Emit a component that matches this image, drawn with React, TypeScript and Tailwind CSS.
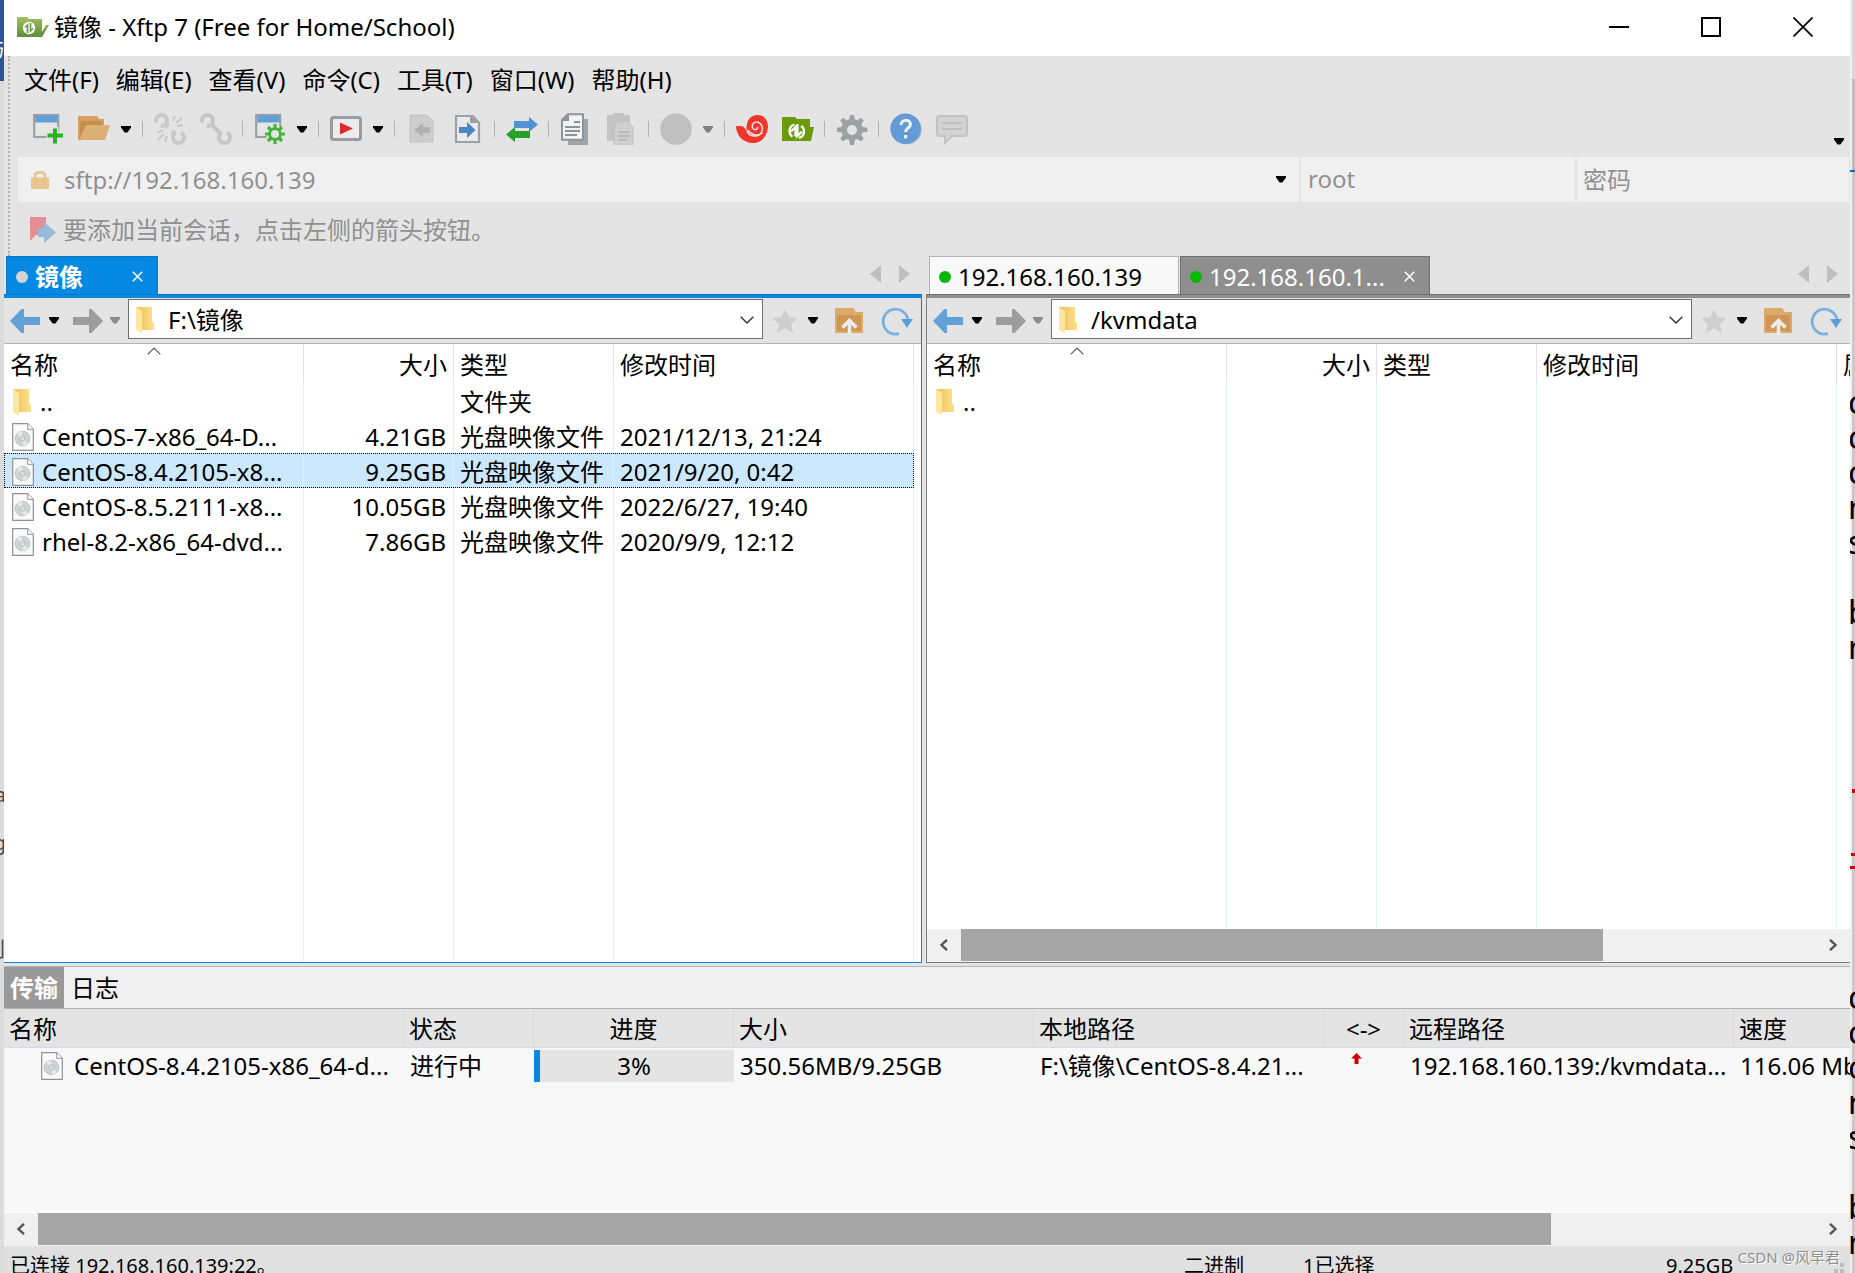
import type { ReactNode } from "react";

type Kid = { children: ReactNode };

function Icon({ children }: Kid) {
  return (
    <svg viewBox="0 0 32 32" className="block h-8 w-8 shrink-0" aria-hidden="true">
      {children}
    </svg>
  );
}

function Tool({ label, children, caret, muted }: { label: string; children: ReactNode; caret?: boolean; muted?: boolean }) {
  return (
    <div className="flex items-center">
      <button type="button" aria-label={label} className="block">
        <Icon>{children}</Icon>
      </button>
      {caret && (
        <button type="button" aria-label={`${label} 菜单`} className={muted ? "mr-px ml-[11px] text-[#808080]" : "mr-px ml-[11px] text-black"}>
          <Caret />
        </button>
      )}
    </div>
  );
}

function Caret() {
  return (
    <svg viewBox="0 0 10 7" className="block h-[7px] w-[10px]" aria-hidden="true">
      <path d="M0 0h10v1.6L6.4 6.4H3.6L0 1.6z" fill="currentColor" />
    </svg>
  );
}

function Group({ children }: Kid) {
  return <div className="flex items-center gap-[14px]">{children}</div>;
}

function Separator() {
  return <div className="mr-[11px] ml-[10px] h-4 w-px bg-[#b4b4b4]" />;
}

function Folder() {
  return (
    <svg viewBox="0 0 20 28" className="block h-7 w-5 shrink-0" aria-hidden="true">
      <defs>
        <linearGradient id="fold" x1="0" x2="1">
          <stop offset="0" stopColor="#e9c05c" />
          <stop offset="1" stopColor="#ffe08a" />
        </linearGradient>
      </defs>
      <path d="M1 1h16v14l2 2v7H6z" fill="url(#fold)" />
      <path d="M1 1l6 4v22.500L1 24z" fill="#ffe7a0" />
    </svg>
  );
}

function DiscFile() {
  return (
    <svg viewBox="0 0 22 28" className="block h-7 w-[22px] shrink-0" aria-hidden="true">
      <path d="M.7.7h15l5.600 5.600v21H.7z" fill="#fafafa" stroke="#8e9296" strokeWidth="1.200" />
      <path d="M15.700.7v5.600h5.600" fill="#fff" stroke="#8e9296" />
      <circle cx="10.500" cy="15.500" r="7.300" fill="#cfd4d4" stroke="#b2b6b8" strokeWidth=".8" />
      <path d="M10.500 15.500L5 11a7 7 0 0 1 5-2.700zM10.500 15.500l5.500 4.500a7 7 0 0 1-5 2.700z" fill="#e4ece8" />
      <circle cx="10.500" cy="15.500" r="2.600" fill="#eef0f0" stroke="#a5a9aa" strokeWidth=".8" />
      <circle cx="10.500" cy="15.500" r=".9" fill="#b6baba" />
    </svg>
  );
}

function SwapMark() {
  return (
    <>
      <path d="M9 18.500l4.500-4.500v9.500M12.500 11.500q-5 1.500-5 6.500 0 4 3 5.500" fill="none" stroke="#fff" strokeWidth="2.300" />
      <path d="M20 18.500l-4.500 4.500V11M17 25q5-1.500 5-6.500 0-4-3-5.500" fill="none" stroke="#fff" strokeWidth="2.300" />
    </>
  );
}

const gearPath =
  "M14 2h4l.8 4.300 2.600 1.100L25 4.900l2.800 2.800-2.500 3.600 1.100 2.600 5 .8v4l-5 .8-1.100 2.600 2.500 3.600L25 28.500 21.400 26l-2.600 1.100L18 32h-4l-.8-4.900-2.600-1.100L7 28.500l-2.800-2.800 2.500-3.600-1.100-2.600-4.600-.8v-4l4.600-.8 1.100-2.600-2.500-3.600L7 4.900l3.600 2.500 2.600-1.100z";

function Toolbar() {
  return (
    <div className="flex h-[53px] items-center pr-[6px] pb-[3px] pl-[28px]">
      <Group>
        <Tool label="新建会话">
          <rect x="2.200" y="2" width="24" height="22" fill="#e6e6e6" stroke="#9aa0a3" strokeWidth="2.200" />
          <rect x="3.300" y="2.500" width="22" height="7" fill="#629fd6" />
          <path d="M23 14v17M14.500 22.500h17" stroke="#e4e4e4" strokeWidth="7" />
          <path d="M23 15.500v15M15.500 22.500h15.500" stroke="#2fae27" strokeWidth="4" />
        </Tool>
        <Tool label="打开" caret>
          <path d="M0 3h11l3 0h5l2 3h5v9L31 12l-4 15H0z" fill="#d6a060" />
          <path d="M2 8h22v5H8L2 24z" fill="#c58f4d" />
          <path d="M8 12h24l-5 15H2z" fill="#dcb077" />
        </Tool>
      </Group>
      <Separator />
      <Group>
        <Tool label="断开">
          <g fill="none" stroke="#c9c9c9">
            <circle cx="7.500" cy="7.500" r="5.500" strokeWidth="4" strokeDasharray="28 6.600" transform="rotate(160 7.500 7.500)" />
            <circle cx="24.500" cy="24.500" r="5.500" strokeWidth="4" strokeDasharray="28 6.600" transform="rotate(300 24.500 24.500)" />
            <path d="M11 11l3 3M18 18l3 3" strokeWidth="5" />
            <path d="M19 8l2-5M22 10l6-5M23 13l6-1M3 19l6-1M4 27l6-6M11 29l2-6" strokeWidth="2.200" />
          </g>
        </Tool>
        <Tool label="重新连接">
          <g fill="none" stroke="#c6c6c6">
            <circle cx="7.500" cy="7.500" r="5.500" strokeWidth="4" strokeDasharray="28 6.600" transform="rotate(160 7.500 7.500)" />
            <circle cx="24.500" cy="24.500" r="5.500" strokeWidth="4" strokeDasharray="28 6.600" transform="rotate(300 24.500 24.500)" />
            <path d="M11 11l10 10" strokeWidth="4.500" />
          </g>
        </Tool>
      </Group>
      <Separator />
      <Tool label="属性" caret>
        <rect x="2.200" y="2" width="24" height="22" fill="#e6e6e6" stroke="#9aa0a3" strokeWidth="2.200" />
        <rect x="3.300" y="2.500" width="22" height="7" fill="#629fd6" />
        <circle cx="21" cy="21" r="9" fill="#e4e4e4" />
        <g stroke="#45b43c" strokeWidth="3.200">
          <path d="M21 11v20M11 21h20M14 14l14 14M28 14L14 28" />
        </g>
        <circle cx="21" cy="21" r="6.800" fill="#45b43c" />
        <circle cx="21" cy="21" r="4" fill="#e4e4e4" />
      </Tool>
      <Separator />
      <Tool label="执行" caret>
        <rect x="1.500" y="4.500" width="29" height="22" rx="2" fill="#ececec" stroke="#989c9f" strokeWidth="3" />
        <path d="M10 9.500l13 6-13 6z" fill="#e3262c" />
      </Tool>
      <Separator />
      <Group>
        <Tool label="下载">
          <path d="M4 2h17l6 6v21H4z" fill="#cdcdcd" stroke="#c3c3c3" />
          <path d="M8 17l9-7v4h7v6h-7v4z" fill="#b2b2b2" />
        </Tool>
        <Tool label="上传">
          <path d="M4 3h17l6 7v19H4z" fill="#eaeaea" stroke="#9aa0a3" strokeWidth="2.200" />
          <path d="M18 2l9 8h-9z" fill="#9aa0a3" />
          <path d="M7 14h8v-5l8.500 8-8.500 8v-5H7z" fill="#4b86cb" />
        </Tool>
      </Group>
      <Separator />
      <Tool label="传输">
        <path d="M8 8h15V4l9 7.500L23 19v-4H8z" fill="#5390d4" />
        <path d="M24 18H9v-4l-9 7.500L9 29v-4h15z" fill="#27a127" />
      </Tool>
      <Separator />
      <Group>
        <Tool label="复制">
          <path d="M11 6h17v26H8V28z" fill="#9fa5a9" />
          <path d="M8 1.200h15v25.600H2V7z" fill="#f2f2f2" stroke="#8f9498" strokeWidth="2" />
          <path d="M1 8L9 1v7z" fill="#8f9498" />
          <path d="M14 9h6M5 14h15M5 18h15M5 22h12" stroke="#8d9194" strokeWidth="1.800" />
        </Tool>
        <Tool label="粘贴">
          <path d="M1 2h6V0h11v2h6v26H1z" fill="#c4c4c4" />
          <path d="M12 8h9l6 6v18H8V13z" fill="#cfcfcf" stroke="#c0c0c0" />
          <path d="M12 19h12M12 23h12M12 27h9" stroke="#b4b4b4" strokeWidth="1.500" />
        </Tool>
      </Group>
      <Separator />
      <Tool label="同步浏览" caret muted>
        <circle cx="16" cy="16" r="15.800" fill="#c0c0c0" />
      </Tool>
      <Separator />
      <Group>
        <Tool label="Xshell">
          <path d="M0 13h5c3 0 4 3 5.500 5C10 8 14 2 21.500 2 28 2 32 7 32 14 31 24 25 30 17 30 7 30 0 22 0 13z" fill="#f2352b" />
          <path d="M11 18c2 6 12 7 14.500 1 2.500-5-1-10-5-10-4 0-5.500 5-3 7 2 1.500 4.500 0 4-2M11.500 17c3 4 9 7 15 3" fill="none" stroke="#efe4e2" strokeWidth="1.500" />
        </Tool>
        <Tool label="Xftp">
          <path d="M0 4h13l2 2h13v8h4l-3 14H0z" fill="#6b9a0b" />
          <SwapMark />
        </Tool>
      </Group>
      <Separator />
      <Tool label="选项">
        <path d={gearPath} fill="#9da1a4" />
        <circle cx="16" cy="17" r="5" fill="#e4e4e4" />
      </Tool>
      <Separator />
      <Group>
        <Tool label="帮助">
          <circle cx="16.700" cy="16.500" r="15" fill="#a9b6c4" />
          <circle cx="15.500" cy="15.700" r="15.200" fill="#649bd4" />
          <path d="M11 12c0-6 9-6 9.500-1 .3 4-5 4-5 8" fill="none" stroke="#eef3f8" strokeWidth="3" />
          <rect x="14" y="22" width="3.200" height="3.400" fill="#eef3f8" />
        </Tool>
        <Tool label="反馈">
          <path d="M4 3h24q3 0 3 3v14q0 3-3 3H16l-7 7v-7H4q-3 0-3-3V6q0-3 3-3z" fill="#d3d3d3" stroke="#c2c2c2" strokeWidth="2" />
          <path d="M6 10h20M6 16h20" stroke="#c0c0c0" strokeWidth="2" />
        </Tool>
      </Group>
      <button type="button" aria-label="工具栏选项" className="mt-[24px] ml-auto">
        <Caret />
      </button>
    </div>
  );
}

function NavArrow({ left }: { left?: boolean }) {
  return (
    <svg viewBox="0 0 30 24" className="block h-6 w-[30px]" aria-hidden="true">
      {left ? (
        <path d="M0 12L11.500 0H14v8h16v8H14v8h-2.500z" fill="#62a1d8" />
      ) : (
        <path d="M30 12L18.500 0H16v8H0v8h16v8h2.500z" fill="#9d9d9d" />
      )}
    </svg>
  );
}

function TabScroll() {
  return (
    <div className="mr-[12px] ml-auto flex items-center gap-[18px] pb-[2px]">
      <button type="button" aria-label="上一个标签">
        <svg viewBox="0 0 11 18" className="block h-[18px] w-[11px]">
          <path d="M11 0v18L0 9z" fill="#bfbfbf" />
        </svg>
      </button>
      <button type="button" aria-label="下一个标签">
        <svg viewBox="0 0 11 18" className="block h-[18px] w-[11px]">
          <path d="M0 0v18l11-9z" fill="#bfbfbf" />
        </svg>
      </button>
    </div>
  );
}

function CloseTab({ label }: { label: string }) {
  return (
    <button type="button" aria-label={label} className="mr-[14px] ml-auto">
      <svg viewBox="0 0 11 11" className="block h-[11px] w-[11px]">
        <path d="M.8.8l9.400 9.400M10.200.8L.8 10.200" stroke="#fff" strokeWidth="1.500" />
      </svg>
    </button>
  );
}

function PathBar({ id, path }: { id: string; path: string }) {
  return (
    <div className="flex h-[46px] shrink-0 items-center border-b border-[#b4b4b4] pr-[8px] pl-[6px]">
      <button type="button" aria-label="后退"><NavArrow left /></button>
      <button type="button" aria-label="后退历史" className="ml-[9px]"><Caret /></button>
      <button type="button" aria-label="前进" className="ml-[14px]"><NavArrow /></button>
      <button type="button" aria-label="前进历史" className="ml-[7px] text-[#8c8c8c]"><Caret /></button>
      <div className="mb-[4px] ml-[8px] flex h-10 min-w-0 flex-1 items-center border border-[#6f6f6f] bg-white pt-[2px] pr-[8px] pl-[6px]">
        <Folder />
        <label htmlFor={id} className="sr-only">路径</label>
        <input id={id} defaultValue={path} className="ml-[13px] h-8 min-w-0 flex-1 bg-transparent text-2xl outline-none" />
        <button type="button" aria-label="展开路径">
          <svg viewBox="0 0 14 8" className="block h-2 w-[14px]">
            <path d="M.7.7L7 7 13.300.7" fill="none" stroke="#333" strokeWidth="1.400" />
          </svg>
        </button>
      </div>
      <button type="button" aria-label="收藏" className="ml-[8px]">
        <svg viewBox="0 0 28 26" className="block h-[26px] w-7">
          <path d="M14 1l3.800 8.300 9 .8-6.800 6 2.200 8.900L14 20.200 5.800 25 8 16.100 1.200 10.100l9-.8z" fill="#cfcfcf" />
        </svg>
      </button>
      <button type="button" aria-label="收藏列表" className="ml-[9px]"><Caret /></button>
      <button type="button" aria-label="上级目录" className="ml-[16px]">
        <svg viewBox="0 0 30 28" className="block h-7 w-[30px]">
          <path d="M1 1h18l3 4h7v21H1z" fill="#dcab6c" />
          <path d="M3 8h24v16H3z" fill="#cf9656" />
          <path d="M15.500 28V14M8.500 20.500l7-7 7 7" fill="none" stroke="#ececec" strokeWidth="3.600" />
        </svg>
      </button>
      <button type="button" aria-label="刷新" className="ml-[17px]">
        <svg viewBox="0 0 32 30" className="block h-[30px] w-8">
          <path d="M18 27.700A12.500 12.500 0 1 1 27 14" fill="none" stroke="#7ab0df" strokeWidth="2.800" />
          <path d="M20 13h12l-6 9z" fill="#5c9fd8" />
        </svg>
      </button>
    </div>
  );
}

type Entry = { name: string; size: string; type: string; date: string; folder?: boolean; selected?: boolean };

const localFiles: Entry[] = [
  { name: "..", size: "", type: "文件夹", date: "", folder: true },
  { name: "CentOS-7-x86_64-D...", size: "4.21GB", type: "光盘映像文件", date: "2021/12/13, 21:24" },
  { name: "CentOS-8.4.2105-x8...", size: "9.25GB", type: "光盘映像文件", date: "2021/9/20, 0:42", selected: true },
  { name: "CentOS-8.5.2111-x8...", size: "10.05GB", type: "光盘映像文件", date: "2022/6/27, 19:40" },
  { name: "rhel-8.2-x86_64-dvd...", size: "7.86GB", type: "光盘映像文件", date: "2020/9/9, 12:12" },
];

const remoteFiles: Entry[] = [{ name: "..", size: "", type: "", date: "", folder: true }];

const line = "border-r border-[#e6f0fa] pt-[2px]";

function FileTable({ rows, extra }: { rows: Entry[]; extra?: string }) {
  const cols = extra ? 5 : 4;
  return (
    <table className={extra ? "h-full w-[1010px] table-fixed border-separate border-spacing-0" : "h-full w-[910px] table-fixed border-separate border-spacing-0"}>
      <colgroup>
        <col className="w-[300px]" />
        <col className="w-[150px]" />
        <col className="w-[160px]" />
        <col className="w-[300px]" />
        {extra && <col />}
      </colgroup>
      <thead>
        <tr className="h-[39px] text-left [&>th]:border-r [&>th]:border-[#e2e2e2] [&>th]:px-[6px] [&>th]:pt-[2px] [&>th]:font-normal">
          <th className="relative">
            名称
            <svg viewBox="0 0 14 8" className="absolute top-[3px] left-1/2 h-2 w-[14px] -translate-x-1/2" aria-hidden="true">
              <path d="M.7 7.300L7 1l6.300 6.300" fill="none" stroke="#555" strokeWidth="1.200" />
            </svg>
          </th>
          <th className="text-right">大小</th>
          <th>类型</th>
          <th>修改时间</th>
          {extra && <th>{extra}</th>}
        </tr>
      </thead>
      <tbody>
        {rows.map((r) => (
          <tr
            key={r.name}
            className={r.selected ? "h-[35px] bg-[#cce8ff] outline-1 -outline-offset-1 outline-black outline-dotted" : "h-[35px]"}
          >
            <td className={line}>
              <div className="flex items-center gap-[8px] pl-[8px]">
                {r.folder ? <Folder /> : <DiscFile />}
                <span>{r.name}</span>
              </div>
            </td>
            <td className={`${line} pr-[7px] text-right`}>{r.size}</td>
            <td className={`${line} pl-[6px] whitespace-nowrap`}>{r.type}</td>
            <td className={`${line} pl-[6px] whitespace-nowrap`}>{r.date}</td>
            {extra && <td />}
          </tr>
        ))}
        <tr aria-hidden="true">
          {Array.from({ length: cols }, (_, i) => (
            <td key={i} className={i < 4 ? line : ""} />
          ))}
        </tr>
      </tbody>
    </table>
  );
}

function ScrollBar({ thumb, label }: { thumb: number; label: string }) {
  return (
    <div className="flex h-8 shrink-0 bg-[#f0f0f0]">
      <button type="button" aria-label={`${label}向左`} className="flex w-[34px] items-center justify-center">
        <svg viewBox="0 0 10 12" className="h-3 w-[10px]">
          <path d="M8 .8L2.500 6 8 11.200" fill="none" stroke="#555" strokeWidth="2.400" />
        </svg>
      </button>
      <div className="flex-1">
        <div className="h-full bg-[#a6a6a6]" style={{ width: `${thumb}%` }} />
      </div>
      <button type="button" aria-label={`${label}向右`} className="flex w-[34px] items-center justify-center">
        <svg viewBox="0 0 10 12" className="h-3 w-[10px]">
          <path d="M2 .8L7.500 6 2 11.200" fill="none" stroke="#555" strokeWidth="2.400" />
        </svg>
      </button>
    </div>
  );
}

function LocalPane() {
  return (
    <section className="flex min-w-0 flex-[918] flex-col">
      <div className="flex h-[38px] pl-[2px]">
        <div className="flex w-[152px] items-center border border-b-0 border-[#0b76c4] bg-[#0589e2] pt-[2px] pl-[9px] text-white">
          <span className="h-3 w-3 rounded-full bg-[#d3d3d3]" />
          <span className="ml-[7px] font-bold">镜像</span>
          <CloseTab label="关闭镜像" />
        </div>
        <TabScroll />
      </div>
      <div className="flex min-h-0 flex-1 flex-col border-r border-b border-[#0585da]">
        <div className="h-1 shrink-0 border-t border-[#0b76c4] bg-[#0589e2]" />
        <PathBar id="local-path" path="F:\镜像" />
        <div className="min-h-0 flex-1 overflow-hidden bg-white">
          <FileTable rows={localFiles} />
        </div>
      </div>
    </section>
  );
}

function RemotePane() {
  return (
    <section className="flex min-w-0 flex-[924] flex-col">
      <div className="flex h-[38px] gap-px pl-[3px]">
        <div className="flex w-[250px] items-center border border-b-0 border-[#b4b4b4] bg-[#f8f8f8] pt-[2px] pl-[9px]">
          <span className="h-3 w-3 rounded-full bg-[#06b806]" />
          <span className="ml-[7px]">192.168.160.139</span>
        </div>
        <div className="flex w-[250px] items-center border border-b-0 border-[#707070] bg-[#8e8e8e] pt-[2px] pl-[9px] text-white">
          <span className="h-3 w-3 rounded-full bg-[#06b806]" />
          <span className="ml-[7px]">192.168.160.1...</span>
          <CloseTab label="关闭 192.168.160.139" />
        </div>
        <TabScroll />
      </div>
      <div className="flex min-h-0 flex-1 flex-col border-b border-l border-[#7f7f7f]">
        <div className="h-1 shrink-0 border-t border-[#707070] bg-[#8e8e8e]" />
        <PathBar id="remote-path" path="/kvmdata" />
        <div className="min-h-0 flex-1 overflow-hidden bg-white">
          <FileTable rows={remoteFiles} extra="属性" />
        </div>
        <ScrollBar thumb={75.1} label="文件列表" />
        <div className="h-px bg-[#f0f0f0]" />
      </div>
    </section>
  );
}

function Transfers() {
  return (
    <section className="flex h-[280px] shrink-0 flex-col border-t border-[#b4b4b4]">
      <div role="tablist" className="flex h-[42px] shrink-0 border-b border-[#b4b4b4] bg-[#f0f0f0]">
        <button type="button" role="tab" aria-selected="true" className="w-[60px] bg-[#999] font-bold text-white">传输</button>
        <button type="button" role="tab" aria-selected="false" className="w-[62px]">日志</button>
      </div>
      <div className="min-h-0 flex-1 overflow-hidden bg-[#f8f8f8]">
        <table className="w-[1980px] table-fixed border-separate border-spacing-0">
          <colgroup>
            <col className="w-[400px]" />
            <col className="w-[130px]" />
            <col className="w-[200px]" />
            <col className="w-[300px]" />
            <col className="w-[290px]" />
            <col className="w-[80px]" />
            <col className="w-[330px]" />
            <col />
          </colgroup>
          <thead>
            <tr className="h-[39px] bg-[#e4e4e4] text-left [&>th]:border-r [&>th]:border-b [&>th]:border-[#d2dcec] [&>th]:px-[5px] [&>th]:pt-[2px] [&>th]:font-normal">
              <th>名称</th>
              <th>状态</th>
              <th className="text-center">进度</th>
              <th>大小</th>
              <th>本地路径</th>
              <th className="text-center">&lt;-&gt;</th>
              <th>远程路径</th>
              <th>速度</th>
            </tr>
          </thead>
          <tbody>
            <tr className="h-9 whitespace-nowrap [&>td]:pl-[6px]">
              <td>
                <div className="flex items-center gap-[11px] pl-[31px]">
                  <DiscFile />
                  <span>CentOS-8.4.2105-x86_64-d...</span>
                </div>
              </td>
              <td>进行中</td>
              <td className="pl-0!">
                <div role="progressbar" aria-valuenow={3} aria-label="进度" className="flex h-8 bg-[#e4e4e4]">
                  <div className="bg-[#0589e2]" style={{ width: "3%" }} />
                  <span className="-ml-[3%] flex-1 text-center">3%</span>
                </div>
              </td>
              <td>350.56MB/9.25GB</td>
              <td>F:\镜像\CentOS-8.4.21...</td>
              <td className="pb-[16px]">
                <svg viewBox="0 0 11 11" className="ml-[21px] block h-[11px] w-[11px]" aria-label="上传">
                  <path d="M5.500 0L11 5.500H7.500V11h-4V5.500H0z" fill="#d00000" />
                </svg>
              </td>
              <td>192.168.160.139:/kvmdata...</td>
              <td>116.06 Mbps</td>
            </tr>
          </tbody>
        </table>
      </div>
      <div className="h-px shrink-0 bg-white" />
      <ScrollBar thumb={85.1} label="传输列表" />
      <div className="h-px shrink-0 bg-[#f4f4f4]" />
    </section>
  );
}

const consoleLines = ["c", "c", "c", "r", "s", "", "b", "r"];

function ConsoleEdge() {
  return (
    <div className="w-2 text-[32px] leading-[35px]">
      {consoleLines.map((c, i) => (
        <div key={i} className="h-[35px]">{c}</div>
      ))}
    </div>
  );
}

export default function App() {
  return (
    <div className="flex h-screen overflow-hidden bg-[#e4e4e4] font-['Noto_Sans','Noto_Sans_CJK_SC',sans-serif] text-2xl leading-8 text-black">
      <div aria-hidden="true" className="relative w-1 shrink-0 overflow-hidden bg-[#dcdcdc] text-xl leading-8 text-[#444]">
        <div className="h-[81px] bg-[#2a5599]" />
        <span className="absolute top-[34px] -right-px text-white">与</span>
        <span className="absolute top-[779px] -right-[2px]">a</span>
        <span className="absolute top-[827px] -right-[2px]">g</span>
        <span className="absolute top-[934px] -right-px">划</span>
      </div>

      <div className="flex min-w-0 flex-1 flex-col">
        <header className="flex h-14 shrink-0 items-center bg-white pb-[2px] pl-[13px]">
          <svg viewBox="0 0 32 21" className="h-[21px] w-8" aria-hidden="true">
            <defs>
              <linearGradient id="brand" x1="0" y1="0" x2="0" y2="1">
                <stop offset="0" stopColor="#a3bf5c" />
                <stop offset="1" stopColor="#5d8c3c" />
              </linearGradient>
            </defs>
            <path d="M0 1q0-1 1-1h9l2 2h13v6h7l-7 12H0z" fill="url(#brand)" />
            <path d="M25 8h4l-4 7z" fill="#fff" />
            <circle cx="12" cy="11" r="6.200" fill="#fff" />
            <path d="M10.500 16V8l-2.500 2.500M13.500 6v8l2.500-2.500" fill="none" stroke="#6f994a" strokeWidth="1.700" />
          </svg>
          <h1 className="ml-[5px]">镜像 - Xftp 7 (Free for Home/School)</h1>
          <div className="mr-[37px] ml-auto flex items-center gap-[72px]">
            <button type="button" aria-label="最小化">
              <svg viewBox="0 0 20 20" className="block h-5 w-5"><path d="M0 10h20" stroke="#000" strokeWidth="2" /></svg>
            </button>
            <button type="button" aria-label="最大化">
              <svg viewBox="0 0 20 20" className="block h-5 w-5"><rect x="1" y="1" width="18" height="18" fill="none" stroke="#000" strokeWidth="2" /></svg>
            </button>
            <button type="button" aria-label="关闭">
              <svg viewBox="0 0 20 20" className="block h-5 w-5"><path d="M.5.5l19 19M19.500.5l-19 19" stroke="#000" strokeWidth="1.700" /></svg>
            </button>
          </div>
        </header>

        <div className="relative shrink-0">
          <div className="absolute inset-y-0 left-1 border-l-2 border-dotted border-[#b0b0b0]" />
          <nav className="flex h-[48px] items-center gap-[17px] pl-[20px]">
            {["文件(F)", "编辑(E)", "查看(V)", "命令(C)", "工具(T)", "窗口(W)", "帮助(H)"].map((m) => (
              <button key={m} type="button">{m}</button>
            ))}
          </nav>
          <Toolbar />
          <div className="grid h-[45px] grid-cols-[1281fr_274fr_272fr] gap-[2px] pr-px pl-[14px] text-[#909090]">
            <div className="flex min-w-0 items-center bg-[#f0f0f0] pr-[13px] pl-[13px]">
              <svg viewBox="0 0 18 18" className="h-[18px] w-[18px]" aria-hidden="true">
                <path d="M4 8V5q0-3.500 3.500-3.500h3Q14 1.500 14 5v3" fill="none" stroke="#e8c48e" strokeWidth="2.600" />
                <rect y="6.500" width="18" height="11.500" rx="1" fill="#e8c48e" />
              </svg>
              <label htmlFor="host" className="sr-only">主机</label>
              <input id="host" defaultValue="sftp://192.168.160.139" className="ml-[15px] h-8 min-w-0 flex-1 bg-transparent outline-none" />
              <button type="button" aria-label="主机历史" className="text-black"><Caret /></button>
            </div>
            <input aria-label="用户名" defaultValue="root" className="min-w-0 bg-[#f0f0f0] px-[7px] pb-[2px] outline-none" />
            <input aria-label="密码" type="password" placeholder="密码" className="min-w-0 bg-[#f0f0f0] px-[6px] outline-none placeholder:text-[#909090]" />
          </div>
          <div className="flex h-[54px] items-center gap-[7px] pt-[2px] pl-[26px] text-[#909090]">
            <svg viewBox="0 0 26 26" className="h-[26px] w-[26px]" aria-hidden="true">
              <path d="M0 0h16v18H6l-6 6z" fill="#e58f92" />
              <path d="M8 11h6V5l12 10.500L14 26v-6H8z" fill="#97b9dc" />
            </svg>
            <p>要添加当前会话，点击左侧的箭头按钮。</p>
          </div>
        </div>

        <main className="flex min-h-0 flex-1 gap-1">
          <LocalPane />
          <RemotePane />
        </main>
        <div className="h-[3px] shrink-0" />
        <Transfers />

        <footer className="relative flex h-[27px] shrink-0 overflow-hidden bg-[#e0e0e0] pt-[4px] pl-[6px] text-xl leading-8">
          <span className="flex-[1174] whitespace-nowrap">已连接 192.168.160.139:22。</span>
          <span className="flex-[119] whitespace-nowrap">二进制</span>
          <span className="flex-[363] whitespace-nowrap">1已选择</span>
          <span className="flex-[184] whitespace-nowrap">9.25GB</span>
          <span className="absolute top-0 right-[10px] text-[15px] leading-[22px] text-[#8e8e8e] [text-shadow:1px_1px_0_#fff]">CSDN @风早君</span>
          <svg viewBox="0 0 10 10" className="absolute right-[6px] bottom-0 h-[10px] w-[10px]" aria-hidden="true">
            <path d="M6 0h4v4H6zM0 6h4v4H0zM6 6h4v4H6z" fill="#bdbdbd" />
          </svg>
        </footer>
      </div>

      <div aria-hidden="true" className="relative w-[5px] shrink-0 overflow-hidden bg-[#c9c9c9]">
        <div className="h-[79px] bg-[#d8d8d8]" />
        <div className="h-[91px] bg-[#bdbdbd]" />
        <div className="absolute inset-y-0 left-0 w-[2px] bg-[#f0f0f0]" />
        <div className="absolute top-[170px] left-0 h-[2px] w-[5px] bg-[#0b6fc0]" />
        <div className="absolute top-[384px] -left-[2px]"><ConsoleEdge /></div>
        <div className="absolute top-[789px] left-[2px] h-1 w-[3px] bg-[#d80000]" />
        <div className="absolute top-[853px] left-px h-[3px] w-1 bg-[#d80000]" />
        <div className="absolute top-[866px] left-0 h-[3px] w-[5px] bg-[#d80000]" />
        <div className="absolute top-[979px] -left-[2px]"><ConsoleEdge /></div>
      </div>
    </div>
  );
}
